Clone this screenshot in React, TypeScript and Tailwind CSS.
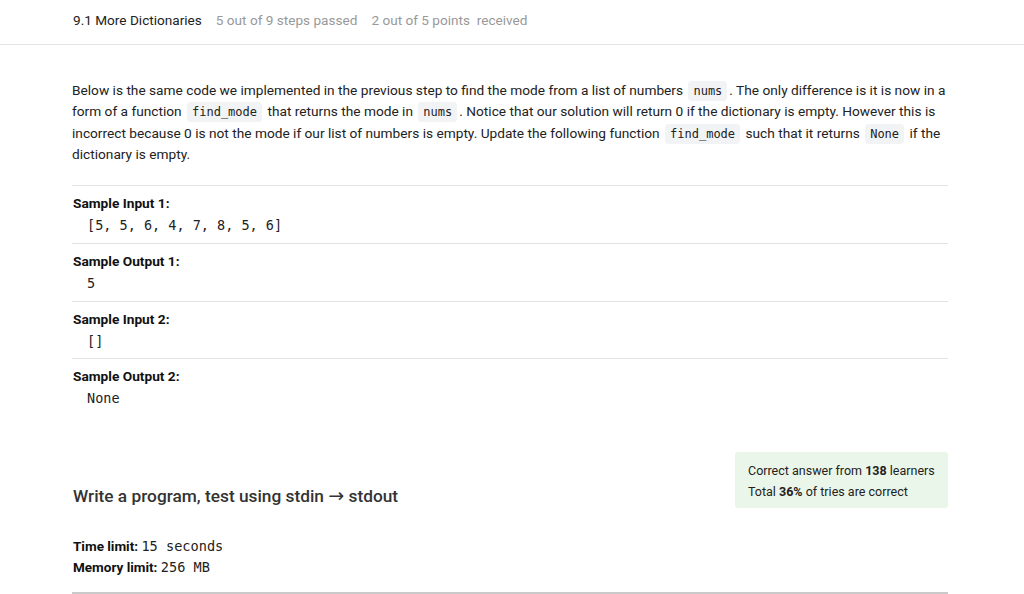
const mono = "font-['DejaVu_Sans_Mono',monospace]";

const Code = ({ children }: { children: string }) => (
  <code className={`${mono} text-[12px] leading-none bg-[#f2f3f4] rounded px-[5px] py-[3px] mx-[2px] text-[#222]`}>
    {children}
  </code>
);

const samples = [
  { label: "Sample Input 1:", value: "[5, 5, 6, 4, 7, 8, 5, 6]" },
  { label: "Sample Output 1:", value: "5" },
  { label: "Sample Input 2:", value: "[]" },
  { label: "Sample Output 2:", value: "None" },
];

export default function App() {
  return (
    <div className="min-h-screen bg-white font-['Roboto',sans-serif] text-[#222]">
      <header className="h-[45px] border-b border-[#e4e4e4] flex items-start pt-[10px] px-[73px] gap-[14px] text-[13.6px] leading-5">
        <span className="text-[#222]">9.1 More Dictionaries</span>
        <span className="text-[#999]">5 out of 9 steps passed</span>
        <span className="text-[#999]">2 out of 5 points&nbsp; received</span>
      </header>

      <main className="w-[876px] ml-[72px]">
        <p className="mt-[35px] text-[13.7px] leading-[21.3px] text-[#222]">
          Below is the same code we implemented in the previous step to find the mode from a list of numbers{" "}
          <Code>nums</Code>. The only difference is it is now in a form of a function <Code>find_mode</Code> that
          returns the mode in <Code>nums</Code>. Notice that our solution will return 0 if the dictionary is empty.
          However this is incorrect because 0 is not the mode if our list of numbers is empty. Update the following
          function <Code>find_mode</Code> such that it returns <Code>None</Code> if the dictionary is empty.
        </p>

        <div className="mt-5">
          {samples.map((s, i) => (
            <div
              key={s.label}
              className={`border-t border-[#e2e2e2] pt-[7px] ${i === samples.length - 1 ? "pb-0" : "pb-[5.7px]"}`}
            >
              <div className="text-[13.7px] leading-5 font-bold text-[#111] pl-px">{s.label}</div>
              <div className={`${mono} text-[13.5px] leading-6 pl-[15px] text-[#222]`}>{s.value}</div>
            </div>
          ))}
        </div>

        <div className="mt-[42px] flex items-end justify-between">
          <h2 className="text-[17.3px] font-medium text-[#333] leading-6 pl-px">
            Write a program, test using stdin{" "}
            <span className="font-['DejaVu_Sans',sans-serif] font-normal text-[19px] leading-none">→</span> stdout
          </h2>
          <div className="w-[213px] h-[56px] bg-[#ebf6ea] rounded-[3px] px-[13px] pt-[8px] text-[12.5px] leading-[21px] text-[#222]">
            <div>
              Correct answer from <b>138</b> learners
            </div>
            <div>
              Total <b>36%</b> of tries are correct
            </div>
          </div>
        </div>

        <div className="mt-[28px] text-[13.5px] leading-[21px] pl-px">
          <div>
            <b className="font-bold text-[#111]">Time limit:</b> <span className={`${mono} text-[13.6px]`}>15 seconds</span>
          </div>
          <div>
            <b className="font-bold text-[#111]">Memory limit:</b> <span className={`${mono} text-[13.6px]`}>256 MB</span>
          </div>
        </div>

        <div className="mt-[14px] h-[2px] bg-[#cacaca]" />
      </main>
    </div>
  );
}
